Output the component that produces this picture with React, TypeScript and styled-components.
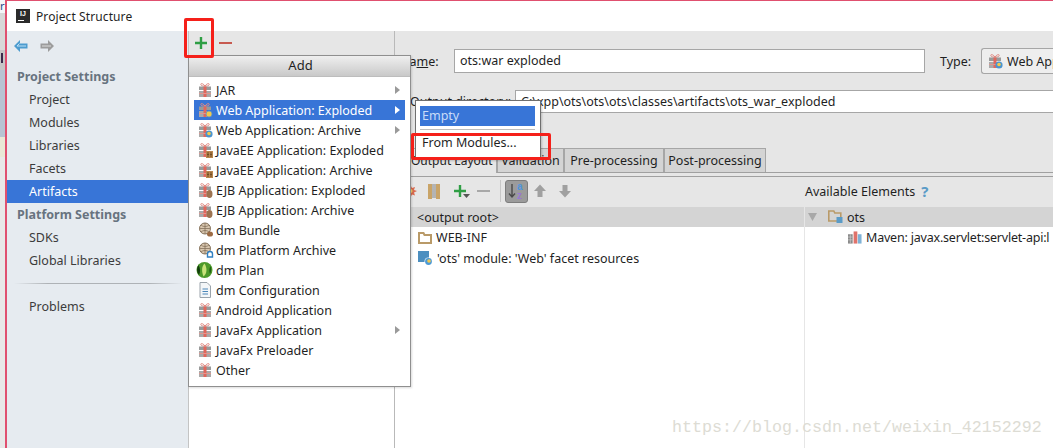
// DEPENDENCY
import React from 'react'

// STYLE
import styled, { createGlobalStyle } from 'styled-components'

const GlobalStyle = createGlobalStyle`
	html, body { margin: 0; padding: 0; background: #fff; }
	* { box-sizing: border-box; }
	body { font-family: "Noto Sans", "Open Sans", sans-serif; font-size: 13px; color: #1f1f1f; }
`

const Page = styled.div`
	position: relative;
	width: 1053px;
	height: 448px;
	display: flex;
	overflow: hidden;
`

const DesktopStrip = styled.div`
	width: 5px;
	display: flex;
	flex-direction: column;
	overflow: hidden;
	box-shadow: inset -2px 0 2px rgba(0, 0, 0, 0.1);
`

const Band = styled.div<{ $h: number; $bg: string }>`
	height: ${p => p.$h}px;
	background: ${p => p.$bg};
	flex-shrink: 0;
	font: 11px/12px "Noto Sans", sans-serif;
	color: #1e4a8a;
`

const StripTick = styled.div`
	width: 2px;
	height: 10px;
	margin: 3px 0 0 1px;
	background: #3a2a4a;
`

const Win = styled.div`
	flex: 1;
	min-width: 0;
	display: flex;
	flex-direction: column;
	border-left: 2px solid #e0506f;
	border-top: 1px solid #e0506f;
	background: #fff;
`

const TitleBar = styled.div`
	height: 30px;
	display: flex;
	align-items: center;
	padding-left: 9px;
	gap: 6px;
	font-size: 12px;
	letter-spacing: 0.1px;
	background: #fff;
`

const IjLogo = styled.div`
	width: 14px;
	height: 14px;
	background: #2b2b2b;
	color: #fff;
	font: bold 7px/10px "Liberation Sans", sans-serif;
	letter-spacing: 0;
	text-align: center;
	position: relative;
	&::after {
		content: '';
		position: absolute;
		left: 2px;
		bottom: 2px;
		width: 6px;
		height: 1px;
		background: #fff;
	}
`

const Body = styled.div`
	flex: 1;
	display: flex;
	min-height: 0;
`

const Sidebar = styled.nav`
	width: 181px;
	background: #e6ebf0;
	display: flex;
	flex-direction: column;
	padding-top: 2px;
`

const NavArrows = styled.div`
	height: 26px;
	display: flex;
	align-items: center;
	gap: 12px;
	padding-left: 7px;
	margin-bottom: 6px;
`

const SectionTitle = styled.div`
	height: 23px;
	line-height: 23px;
	padding-left: 10px;
	font-weight: 700;
	font-size: 12.5px;
	color: #68737f;
`

const NavItem = styled.div<{ $active?: boolean }>`
	height: 23px;
	line-height: 23px;
	padding-left: 22px;
	font-size: 12.5px;
	color: ${p => (p.$active ? '#fff' : '#3c3c3c')};
	background: ${p => (p.$active ? '#3875d7' : 'transparent')};
`

const NavRule = styled.div`
	height: 1px;
	margin: 11px 5px 11px 7px;
	background: linear-gradient(90deg, #e6ebf0, #aeb2b6 20%, #aeb2b6 80%, #e6ebf0);
`

const ListPanel = styled.section`
	width: 207px;
	background: #fff;
	border-left: 1px solid #c4c4c4;
	border-right: 1px solid #b9b9b9;
`

const ListToolbar = styled.div`
	height: 25px;
	background: #e6e6e6;
	border-bottom: 1px solid #a0a0a0;
	display: flex;
	align-items: center;
	gap: 11px;
	padding-left: 5px;
`

const Editor = styled.section`
	flex: 1;
	min-width: 0;
	background: #e6e6e6;
	display: flex;
	flex-direction: column;
`

const FormRow = styled.div<{ $top: number; $left: number }>`
	display: flex;
	align-items: center;
	margin-top: ${p => p.$top}px;
	padding-left: ${p => p.$left}px;
`

const FieldLabel = styled.label<{ $w: number; $gap?: number }>`
	width: ${p => p.$w}px;
	margin-left: ${p => p.$gap ?? 0}px;
	flex-shrink: 0;
	font-size: 12.5px;
	white-space: nowrap;
`

const TextField = styled.div<{ $w?: number; $h: number }>`
	${p => (p.$w ? `width: ${p.$w}px;` : 'flex: 1;')}
	height: ${p => p.$h}px;
	line-height: ${p => p.$h - 2}px;
	background: #fff;
	border: 1px solid #a6a6a6;
	${p => (p.$w ? '' : 'border-right: 0;')}
	padding-left: 5px;
	font-size: 12.5px;
	white-space: nowrap;
	overflow: hidden;
`

const ComboBox = styled.div`
	flex: 1;
	height: 26px;
	display: flex;
	align-items: center;
	gap: 4px;
	padding-left: 6px;
	background: #eee;
	border: 1px solid #a6a6a6;
	border-right: 0;
	border-radius: 3px 0 0 3px;
	font-size: 12.5px;
	white-space: nowrap;
	overflow: hidden;
`

const TabStrip = styled.div`
	margin-top: 35px;
	padding-left: 15px;
	height: 25px;
	display: flex;
	border-bottom: 1px solid #a0a0a0;
`

const Tab = styled.div<{ $w: number; $active?: boolean }>`
	width: ${p => p.$w}px;
	height: ${p => (p.$active ? 25 : 24)}px;
	line-height: 24px;
	text-align: ${p => (p.$active ? 'left' : 'center')};
	padding-left: ${p => (p.$active ? 1 : 0)}px;
	font-size: ${p => (p.$active ? 12 : 12.5)}px;
	white-space: nowrap;
	background: ${p => (p.$active ? '#e6e6e6' : '#d4d4d4')};
	border: 1px solid #a6a6a6;
	border-bottom: 0;
	border-left-width: ${p => (p.$active ? 0 : 1)}px;
`

const Split = styled.div`
	flex: 1;
	margin-top: 3px;
	border-top: 1px solid #a0a0a0;
	display: flex;
	min-height: 0;
`

const Pane = styled.div<{ $w?: number }>`
	${p => (p.$w ? `width: ${p.$w}px; border-right: 1px solid #e6e6e6;` : 'flex: 1; min-width: 0;')}
	display: flex;
	flex-direction: column;
	background: #fff;
`

const PaneToolbar = styled.div<{ $left: number }>`
	height: 30px;
	flex-shrink: 0;
	background: #e6e6e6;
	display: flex;
	align-items: center;
	padding-left: ${p => p.$left}px;
	padding-bottom: 2px;
	font-size: 12.5px;
	white-space: nowrap;
`

const Slot = styled.div<{ $w: number; $start?: boolean }>`
	width: ${p => p.$w}px;
	flex-shrink: 0;
	display: flex;
	align-items: center;
	justify-content: ${p => (p.$start ? 'flex-start' : 'center')};
	padding-left: ${p => (p.$start ? 1 : 0)}px;
`

const ToolDivider = styled.div`
	width: 1px;
	height: 22px;
	background: #c8c8c8;
	margin: 0 4px 0 5px;
`

const SortButton = styled.div`
	width: 23px;
	height: 23px;
	flex-shrink: 0;
	background: #9b9b9b;
	border: 1px solid #7d7d7d;
	border-radius: 3px;
	display: flex;
	align-items: center;
	justify-content: center;
`

const HelpMark = styled.span`
	color: #5a9bc7;
	font-weight: 700;
	font-size: 15px;
	margin-left: 6px;
`

const TreeRow = styled.div<{ $left: number; $root?: boolean; $tight?: boolean }>`
	height: ${p => (p.$root ? 20 : 21)}px;
	display: flex;
	align-items: center;
	gap: 4px;
	padding-left: ${p => p.$left}px;
	font-size: 12.5px;
	letter-spacing: ${p => (p.$tight ? -0.2 : 0)}px;
	white-space: nowrap;
	overflow: hidden;
	background: ${p => (p.$root ? '#d4d4d4' : 'transparent')};
`

const PopupMenu = styled.div`
	position: absolute;
	left: 188px;
	top: 55px;
	width: 223px;
	height: 332px;
	background: #fff;
	border: 1px solid #8f8f8f;
	box-shadow: 1px 1px 2px rgba(0, 0, 0, 0.15);
`

const MenuHeader = styled.div`
	height: 21px;
	line-height: 19px;
	padding-left: 2px;
	text-align: center;
	font-size: 13px;
	background: linear-gradient(#efefef, #c9c9c9);
	border-bottom: 1px solid #bdbdbd;
	margin-bottom: 3px;
`

const MenuRow = styled.div<{ $active?: boolean }>`
	height: 20px;
	margin: 0 5px;
	padding-left: 4px;
	display: flex;
	align-items: center;
	gap: 3px;
	font-size: 12.5px;
	white-space: nowrap;
	background: ${p => (p.$active ? '#3875d7' : 'transparent')};
	color: ${p => (p.$active ? '#fff' : '#1f1f1f')};
`

const MenuLabel = styled.span`
	flex: 1;
`

const SubArrow = styled.span<{ $active?: boolean }>`
	width: 0;
	height: 0;
	margin-right: 5px;
	border-left: 5px solid ${p => (p.$active ? '#fff' : '#9a9a9a')};
	border-top: 4px solid transparent;
	border-bottom: 4px solid transparent;
`

const SubMenu = styled.div`
	position: absolute;
	left: 415px;
	top: 100px;
	width: 126px;
	height: 60px;
	background: #fff;
	border: 1px solid #6f6f6f;
	padding: 5px 5px 0 4px;
	box-shadow: 1px 1px 2px rgba(0, 0, 0, 0.2);
`

const SubItem = styled.div<{ $active?: boolean }>`
	height: 20px;
	line-height: 20px;
	padding-left: 2px;
	font-size: 12.5px;
	white-space: nowrap;
	background: ${p => (p.$active ? '#3875d7' : 'transparent')};
	color: ${p => (p.$active ? '#c9dcf8' : '#1f1f1f')};
`

const SubRule = styled.div`
	height: 1px;
	background: #bdbdbd;
	margin: 3px 0;
`

const RedBox = styled.div<{ $x: number; $y: number; $w: number; $h: number }>`
	position: absolute;
	left: ${p => p.$x}px;
	top: ${p => p.$y}px;
	width: ${p => p.$w}px;
	height: ${p => p.$h}px;
	border: 3px solid #f5201a;
	border-radius: 2px;
`

const Watermark = styled.div`
	position: absolute;
	left: 672px;
	top: 418px;
	font-family: "Liberation Mono", monospace;
	font-size: 16.67px;
	line-height: 20px;
	color: #dddcd4;
	white-space: nowrap;
`

// ICONS
type Badge = 'none' | 'web' | 'globe' | 'ee' | 'jar'

const Gift = ({ badge = 'none' }: { badge?: Badge }) => (
	<svg width="15" height="16" viewBox="0 0 15 16" style={{ flexShrink: 0 }}>
		<path d="M7 4C5 1 2 1 3 3c.4 1 2 1 4 1zm0 0c2-3 5-3 4-1-.4 1-2 1-4 1z" fill="none" stroke="#e08b84" strokeWidth="1" />
		<rect x="1" y="4.5" width="12" height="3.5" fill="#9a9a9a" />
		<rect x="1" y="9" width="12" height="6" fill="#a9a9a9" />
		<rect x="5.5" y="4.5" width="3" height="10.5" fill="#e2675c" />
		<rect x="1" y="11" width="12" height="1" fill="#e2958e" />
		{badge === 'web' && <circle cx="11" cy="12" r="3" fill="#f2c94c" stroke="#5f93bf" strokeWidth="0.8" />}
		{badge === 'globe' && (
			<>
				<circle cx="11" cy="12" r="3.6" fill="#4a94d0" />
				<circle cx="11" cy="11.5" r="1.8" fill="#f2c94c" />
			</>
		)}
		{badge === 'ee' && (
			<>
				<rect x="8" y="9" width="7" height="7" fill="#b9864f" />
				<path d="M9 11h2M9 12.5h2M9 14h2M12 11h2M12 12.5h2M12 14h2" stroke="#5b3d1c" strokeWidth="0.8" />
			</>
		)}
		{badge === 'jar' && <ellipse cx="11.5" cy="12" rx="3" ry="4" fill="#9c7350" />}
	</svg>
)

const OsgiGlobe = ({ blue }: { blue?: boolean }) => (
	<svg width="16" height="16" viewBox="0 0 16 16" style={{ flexShrink: 0, marginRight: -1 }}>
		<circle cx="7" cy="6.5" r="5.5" fill="#d8c6ae" stroke="#85725c" />
		<path d="M1.5 6.5h11M7 1v11M3 3c2 2 6 2 8 0M3 10c2-2 6-2 8 0" stroke="#85725c" strokeWidth="0.8" fill="none" />
		{blue ? (
			<path d="M9.5 15v-3a2.5 2.5 0 0 1 5 0v3z" fill="#fff" stroke="#2f7fc1" strokeWidth="1.4" />
		) : (
			<ellipse cx="12" cy="12" rx="3" ry="2.6" fill="#9c6a43" />
		)}
	</svg>
)

const SphereIcon = () => (
	<svg width="17" height="16" viewBox="0 0 17 16" style={{ flexShrink: 0, marginLeft: -2 }}>
		<circle cx="8.5" cy="8" r="8" fill="#4d9a2a" />
		<path d="M8.5 1.500c-3 3-3 8-1 13 3.500-3 4-8 1-13z" fill="#c9e27a" />
		<path d="M2.500 3c-2 3-2 7 .5 10 1.500-3 1.500-7-.5-10z" fill="#123d0c" />
		<path d="M14.500 4c1 2.500 1 5.500-.5 8-1-2.500-1-5.500.5-8z" fill="#1f5f12" />
	</svg>
)

const DocIcon = () => (
	<svg width="14" height="16" viewBox="0 0 14 16" style={{ flexShrink: 0, marginRight: 1 }}>
		<path d="M2 .5h7l3.5 3.5v11.5H2z" fill="#f4f6f8" stroke="#9aa3ab" />
		<path d="M4.5 7h5.5M4.5 9.5h5.5M4.5 12h5.5" stroke="#4c87b9" />
	</svg>
)

const Folder = () => (
	<svg width="14" height="12" viewBox="0 0 14 12" style={{ flexShrink: 0 }}>
		<path d="M1 11V1h4.500l1 2H13v8z" fill="#fff" stroke="#b99a68" strokeWidth="2" />
	</svg>
)

const ModuleFolder = () => (
	<svg width="15" height="14" viewBox="0 0 15 14" style={{ flexShrink: 0 }}>
		<path d="M.8 11V1h5l1 2h6v8z" fill="#d4d4d4" stroke="#b99a68" strokeWidth="1.6" />
		<rect x="8.5" y="7" width="6" height="6" fill="#5a9bc7" />
	</svg>
)

const WebResource = () => (
	<svg width="15" height="15" viewBox="0 0 15 15" style={{ flexShrink: 0 }}>
		<rect x="0" y="0" width="11" height="11" fill="#4c8fc0" />
		<circle cx="10.5" cy="10.5" r="4" fill="#fff" />
		<circle cx="10.5" cy="10.5" r="3.4" fill="#4c9ad6" />
		<circle cx="11" cy="10" r="1.8" fill="#f2c94c" />
	</svg>
)

const Library = () => (
	<svg width="14" height="13" viewBox="0 0 15 13" style={{ flexShrink: 0 }}>
		<rect x="0" y="3" width="5" height="10" fill="#8a8a8a" />
		<path d="M0 6h5M0 9h5M2.5 3v10" stroke="#c9c9c9" strokeWidth="0.8" />
		<rect x="6" y="0" width="4" height="13" fill="#e0736b" />
		<rect x="10.5" y="3" width="4" height="10" fill="#7fb2d6" />
	</svg>
)

const ArrowLeft = () => (
	<svg width="14" height="14" viewBox="0 0 14 14">
		<path d="M0 7l6-6v3.5h7.5v5H6V13z" fill="#4d9ccf" />
		<path d="M3 7l2.5-2.5M3 7h9" stroke="#bfe0f5" strokeWidth="1" />
	</svg>
)

const ArrowRight = () => (
	<svg width="14" height="14" viewBox="0 0 14 14">
		<path d="M14 7L8 1v3.5H.5v5H8V13z" fill="#9c9c9c" />
		<path d="M11 7H2" stroke="#dcdcdc" strokeWidth="1" />
	</svg>
)

const Plus = () => (
	<svg width="14" height="14" viewBox="0 0 14 14" style={{ flexShrink: 0 }}>
		<path d="M7 1v12M1 7h12" stroke="#2f9e44" strokeWidth="2.4" />
	</svg>
)

const Minus = ({ color }: { color: string }) => (
	<svg width="13" height="14" viewBox="0 0 13 14">
		<path d="M0 7h13" stroke={color} strokeWidth="2" />
	</svg>
)

const FireIcon = () => (
	<svg width="13" height="14" viewBox="0 0 13 14" style={{ flexShrink: 0 }}>
		<path d="M6.5 1l1.5 3 3-1-1 3 3 1-3 1.500 1 3-3-1-1.500 3-1.500-3-3 1 1-3L0 7l3-1-1-3 3 1z" fill="#d96a4f" />
		<circle cx="6.500" cy="7" r="2" fill="#f2d06b" />
	</svg>
)

const ZebraIcon = () => (
	<svg width="12" height="15" viewBox="0 0 12 15">
		<rect x="0" y="0" width="4" height="15" fill="#c9a468" />
		<rect x="8" y="0" width="4" height="15" fill="#c9a468" />
		<path d="M4 1h4M4 3h4M4 5h4M4 7h4M4 9h4M4 11h4M4 13h4" stroke="#777" strokeWidth="0.9" />
	</svg>
)

const SortIcon = () => (
	<svg width="20" height="20" viewBox="0 0 20 20">
		<path d="M5 3v13M2 12.500L5 16l3-3.500" stroke="#4a4a4a" strokeWidth="1.400" fill="none" />
		<text x="10" y="9" fontSize="10" fontFamily="Liberation Sans" fontWeight="700" fill="#4f95dc">a</text>
		<text x="10" y="18" fontSize="10" fontFamily="Liberation Sans" fontWeight="700" fill="#9a78d4">z</text>
	</svg>
)

const UpDown = ({ down }: { down?: boolean }) => (
	<svg width="14" height="14" viewBox="0 0 14 14">
		<path d={down ? 'M4.500 1h5v6H13l-6 6.500L1 7h3.500z' : 'M4.500 13h5V7H13L7 .5 1 7h3.500z'} fill="#a0a0a0" />
	</svg>
)

const Caret = () => (
	<svg width="7" height="4" viewBox="0 0 7 4" style={{ alignSelf: 'flex-end', marginLeft: -4, flexShrink: 0 }}>
		<path d="M0 0h7L3.500 4z" fill="#555" />
	</svg>
)

const TreeCaret = () => (
	<svg width="9" height="8" viewBox="0 0 9 8" style={{ flexShrink: 0, marginRight: 7 }}>
		<path d="M0 0h9L4.500 8z" fill="#a8a8a8" />
	</svg>
)

// DATA
type MenuEntry = { label: string; icon: React.ReactNode; arrow?: boolean; active?: boolean }

const menuEntries: MenuEntry[] = [
	{ label: 'JAR', icon: <Gift />, arrow: true },
	{ label: 'Web Application: Exploded', icon: <Gift badge="web" />, arrow: true, active: true },
	{ label: 'Web Application: Archive', icon: <Gift badge="globe" />, arrow: true },
	{ label: 'JavaEE Application: Exploded', icon: <Gift badge="ee" /> },
	{ label: 'JavaEE Application: Archive', icon: <Gift badge="ee" /> },
	{ label: 'EJB Application: Exploded', icon: <Gift badge="jar" /> },
	{ label: 'EJB Application: Archive', icon: <Gift badge="jar" /> },
	{ label: 'dm Bundle', icon: <OsgiGlobe /> },
	{ label: 'dm Platform Archive', icon: <OsgiGlobe blue /> },
	{ label: 'dm Plan', icon: <SphereIcon /> },
	{ label: 'dm Configuration', icon: <DocIcon /> },
	{ label: 'Android Application', icon: <Gift /> },
	{ label: 'JavaFx Application', icon: <Gift />, arrow: true },
	{ label: 'JavaFx Preloader', icon: <Gift /> },
	{ label: 'Other', icon: <Gift /> },
]

const tabs = [
	{ label: 'Validation', w: 67 },
	{ label: 'Pre-processing', w: 100 },
	{ label: 'Post-processing', w: 102 },
]

export default function App() {
	return (
		<Page>
			<GlobalStyle />
			<DesktopStrip>
				<Band $h={13} $bg="#f4f6f8">r</Band>
				<Band $h={37} $bg="#d8d8d8" />
				<Band $h={20} $bg="#c6c6c6"><StripTick /></Band>
				<Band $h={67} $bg="#b8c4d3" />
				<Band $h={20} $bg="#e9e8d6" />
				<Band $h={291} $bg="#e8e8e8" />
			</DesktopStrip>

			<Win>
				<TitleBar>
					<IjLogo>IJ</IjLogo>
					Project Structure
				</TitleBar>

				<Body>
					<Sidebar>
						<NavArrows>
							<ArrowLeft />
							<ArrowRight />
						</NavArrows>
						<SectionTitle>Project Settings</SectionTitle>
						<NavItem>Project</NavItem>
						<NavItem>Modules</NavItem>
						<NavItem>Libraries</NavItem>
						<NavItem>Facets</NavItem>
						<NavItem $active>Artifacts</NavItem>
						<SectionTitle>Platform Settings</SectionTitle>
						<NavItem>SDKs</NavItem>
						<NavItem>Global Libraries</NavItem>
						<NavRule />
						<NavItem>Problems</NavItem>
					</Sidebar>

					<ListPanel>
						<ListToolbar>
							<Plus />
							<Minus color="#c75a50" />
						</ListToolbar>
					</ListPanel>

					<Editor>
						<FormRow $top={17} $left={5}>
							<FieldLabel $w={54}>Na<u>m</u>e:</FieldLabel>
							<TextField $w={471} $h={24}>ots:war exploded</TextField>
							<FieldLabel $w={41} $gap={15}>Type:</FieldLabel>
							<ComboBox><Gift badge="globe" />Web Application: Exploded</ComboBox>
						</FormRow>
						<FormRow $top={16} $left={15}>
							<FieldLabel $w={105}>Output directory:</FieldLabel>
							<TextField $h={23}>C:\xpp\ots\ots\ots\classes\artifacts\ots_war_exploded</TextField>
						</FormRow>

						<TabStrip>
							<Tab $w={87} $active>Output Layout</Tab>
							{tabs.map(t => <Tab key={t.label} $w={t.w}>{t.label}</Tab>)}
						</TabStrip>

						<Split>
							<Pane $w={410}>
								<PaneToolbar $left={9}>
									<Slot $w={12}><FireIcon /></Slot>
									<Slot $w={36}><ZebraIcon /></Slot>
									<Slot $w={20} $start><Plus /><Caret /></Slot>
									<Slot $w={23}><Minus color="#a8a8a8" /></Slot>
									<ToolDivider />
									<SortButton><SortIcon /></SortButton>
									<Slot $w={24}><UpDown /></Slot>
									<Slot $w={26}><UpDown down /></Slot>
								</PaneToolbar>
								<TreeRow $root $left={22}>&lt;output root&gt;</TreeRow>
								<TreeRow $left={23}><Folder />WEB-INF</TreeRow>
								<TreeRow $left={23}><WebResource />'ots' module: 'Web' facet resources</TreeRow>
							</Pane>
							<Pane>
								<PaneToolbar $left={0}>
									Available Elements
									<HelpMark>?</HelpMark>
								</PaneToolbar>
								<TreeRow $root $left={3}><TreeCaret /><ModuleFolder />ots</TreeRow>
								<TreeRow $left={43} $tight><Library />Maven: javax.servlet:servlet-api:l</TreeRow>
							</Pane>
						</Split>
					</Editor>
				</Body>
			</Win>

			<PopupMenu>
				<MenuHeader>Add</MenuHeader>
				{menuEntries.map(e => (
					<MenuRow key={e.label} $active={e.active}>
						{e.icon}
						<MenuLabel>{e.label}</MenuLabel>
						{e.arrow && <SubArrow $active={e.active} />}
					</MenuRow>
				))}
			</PopupMenu>

			<SubMenu>
				<SubItem $active>Empty</SubItem>
				<SubRule />
				<SubItem>From Modules...</SubItem>
			</SubMenu>

			<RedBox $x={184} $y={18} $w={30} $h={40} />
			<RedBox $x={411} $y={133} $w={140} $h={27} />
			<Watermark>https://blog.csdn.net/weixin_42152292</Watermark>
		</Page>
	)
}
